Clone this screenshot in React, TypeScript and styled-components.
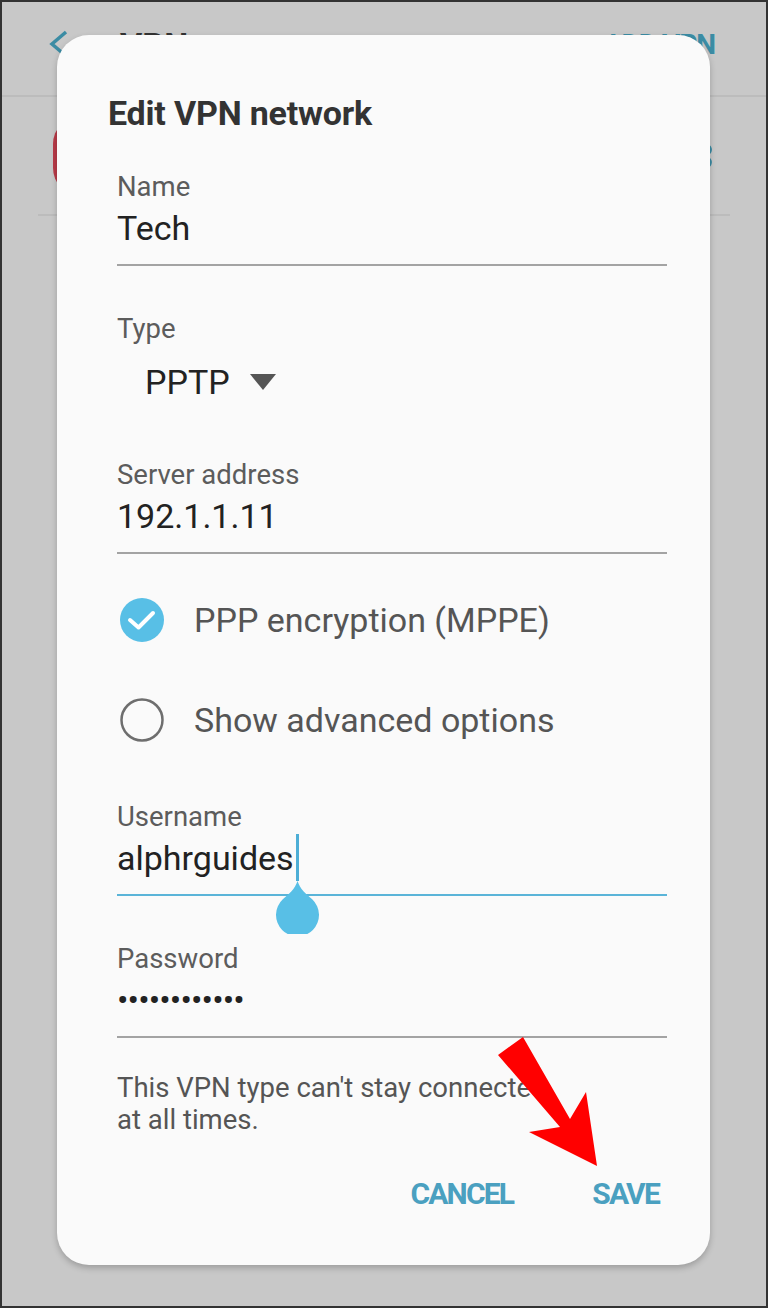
import React from 'react'
import styled, { createGlobalStyle } from 'styled-components'
import { Settings } from 'lucide-react'

const TEAL = '#3b8ca4'
const ACCENT = '#58bfe6'
const LINE = '#a3a3a3'

const GlobalStyle = createGlobalStyle`
  html, body {
    margin: 0;
    padding: 0;
    background: #c8c8c8;
  }
  body {
    font-family: Roboto, 'Noto Sans', 'Liberation Sans', sans-serif;
    -webkit-font-smoothing: antialiased;
  }
  * {
    box-sizing: border-box;
  }
`

const App = () => {
  return (
    <>
      <GlobalStyle />
      <Screen>
        <AppBar>
          <BackIcon viewBox="0 0 22 28">
            <polyline points="18,2 4,14 18,26" />
          </BackIcon>
          <AppTitle>VPN</AppTitle>
          <AddVpn>ADD VPN</AddVpn>
        </AppBar>
        <ListRow>
          <AppIcon />
          <Settings size={40} color={TEAL} strokeWidth={2.4} />
        </ListRow>

        <Dialog>
          <Title>Edit VPN network</Title>
          <Form>
            <Field $mt={38}>
              <Label>Name</Label>
              <Value>Tech</Value>
            </Field>

            <TypeBlock>
              <Label>Type</Label>
              <TypeSelect>
                <Value>PPTP</Value>
                <Caret />
              </TypeSelect>
            </TypeBlock>

            <Field $mt={57}>
              <Label>Server address</Label>
              <Value>192.1.1.11</Value>
            </Field>

            <CheckList>
              <CheckRow>
                <CheckCircle $checked viewBox="0 0 44 44">
                  <circle cx="22" cy="22" r="22" />
                  <polyline points="10,22 18.5,29.5 33,15" />
                </CheckCircle>
                <CheckLabel>PPP encryption (MPPE)</CheckLabel>
              </CheckRow>
              <CheckRow>
                <CheckCircle viewBox="0 0 44 44">
                  <circle cx="22" cy="22" r="20.5" />
                </CheckCircle>
                <CheckLabel>Show advanced options</CheckLabel>
              </CheckRow>
            </CheckList>

            <Field $mt={51} $focused>
              <Label>Username</Label>
              <Value>
                alphrguides
                <Cursor>
                  <CursorBar />
                  <Handle viewBox="0 0 43 53">
                    <path d="M21.5 0 C24 8 30 13 36.2 18.2 A21.5 21.5 0 1 1 6.8 18.2 C13 13 19 8 21.5 0 Z" />
                  </Handle>
                </Cursor>
              </Value>
            </Field>

            <Field $mt={47}>
              <Label>Password</Label>
              <Dots>{'\u2022'.repeat(12)}</Dots>
            </Field>

            <Info>
              This VPN type can't stay connected
              <br />
              at all times.
            </Info>

            <Actions>
              <ActionButton>CANCEL</ActionButton>
              <ActionButton>SAVE</ActionButton>
            </Actions>
          </Form>
        </Dialog>

        <Annotation viewBox="490 1030 115 145">
          <polygon points="498,1055 523,1037 570,1119 586,1092 597,1166 529,1132 560,1127" />
        </Annotation>
      </Screen>
    </>
  )
}

export default App

const Screen = styled.div`
  position: relative;
  width: 768px;
  height: 1308px;
  border: 2px solid #333;
  background: #c8c8c8;
  overflow: hidden;
`

const AppBar = styled.header`
  display: flex;
  align-items: flex-start;
  height: 95px;
  padding: 0 51px 0 46px;
  border-bottom: 2px solid #bcbcbc;
`

const BackIcon = styled.svg`
  width: 22px;
  height: 28px;
  margin-top: 28px;
  fill: none;
  stroke: ${TEAL};
  stroke-width: 3.5;
`

const AppTitle = styled.h1`
  margin: 23px 0 0 50px;
  font-size: 34px;
  line-height: 40px;
  font-weight: 700;
  color: #333;
`

const AddVpn = styled.span`
  margin: 27px 0 0 auto;
  font-size: 28px;
  line-height: 32px;
  font-weight: 700;
  letter-spacing: -1px;
  color: ${TEAL};
`

const ListRow = styled.div`
  display: flex;
  align-items: center;
  justify-content: space-between;
  height: 119px;
  margin: 0 36px;
  padding: 0 15px;
  border-bottom: 2px solid #bcbcbc;
`

const AppIcon = styled.div`
  width: 80px;
  height: 80px;
  border-radius: 28px;
  background: #b83a48;
`

const Dialog = styled.section`
  position: absolute;
  left: 55px;
  top: 33px;
  width: 653px;
  height: 1230px;
  padding: 58px 43px 0 51px;
  border-radius: 32px;
  background: #fafafa;
  box-shadow: 0 3px 6px rgba(0, 0, 0, 0.22);
`

const Title = styled.h2`
  margin: 0;
  font-size: 34px;
  line-height: 40px;
  font-weight: 700;
  letter-spacing: -0.2px;
  color: #333;
`

const Form = styled.div`
  display: flex;
  flex-direction: column;
  margin-left: 9px;
`

const Field = styled.div<{ $mt: number; $focused?: boolean }>`
  display: flex;
  flex-direction: column;
  gap: 5px;
  margin-top: ${({ $mt }) => $mt}px;
  padding-bottom: 16px;
  border-bottom: 2px solid ${({ $focused }) => ($focused ? '#5ab4d8' : LINE)};
`

const Label = styled.div`
  font-size: 27.5px;
  line-height: 32px;
  color: #5c5c5c;
`

const Value = styled.div`
  font-size: 34px;
  line-height: 40px;
  color: #222;
  white-space: nowrap;
`

const Dots = styled(Value)`
  letter-spacing: -0.9px;
`

const TypeBlock = styled.div`
  display: flex;
  flex-direction: column;
  margin-top: 47px;
`

const TypeSelect = styled.div`
  display: flex;
  align-items: center;
  gap: 20px;
  margin: 17px 0 0 28px;
`

const Caret = styled.span`
  width: 0;
  height: 0;
  border-left: 13.5px solid transparent;
  border-right: 13.5px solid transparent;
  border-top: 16px solid #555;
`

const CheckList = styled.div`
  display: flex;
  flex-direction: column;
  gap: 40px;
  margin-top: 36px;
`

const CheckRow = styled.div`
  display: flex;
  align-items: center;
  gap: 30px;
  height: 60px;
  padding-left: 3px;
`

const CheckCircle = styled.svg<{ $checked?: boolean }>`
  width: 44px;
  height: 44px;
  flex-shrink: 0;

  circle {
    fill: ${({ $checked }) => ($checked ? ACCENT : 'none')};
    stroke: ${({ $checked }) => ($checked ? 'none' : '#6e6e6e')};
    stroke-width: 2.5;
  }

  polyline {
    fill: none;
    stroke: #fff;
    stroke-width: 4;
    stroke-linecap: round;
    stroke-linejoin: round;
  }
`

const CheckLabel = styled.span`
  font-size: 34px;
  line-height: 40px;
  color: #555;
`

const Cursor = styled.span`
  position: relative;
  display: inline-block;
  width: 3px;
  height: 0;
  margin-left: 2px;
  vertical-align: top;
`

const CursorBar = styled.span`
  position: absolute;
  top: -4px;
  left: 0;
  width: 3px;
  height: 47px;
  background: #4daed6;
`

const Handle = styled.svg`
  position: absolute;
  top: 43px;
  left: -20px;
  width: 43px;
  height: 53px;
  fill: ${ACCENT};
`

const Info = styled.p`
  margin: 34px 0 0;
  font-size: 27.5px;
  line-height: 32px;
  color: #555;
`

const Actions = styled.div`
  display: flex;
  justify-content: flex-end;
  gap: 79px;
  margin-top: 38px;
  padding-right: 8px;
`

const ActionButton = styled.button`
  padding: 0;
  border: none;
  background: none;
  font-family: inherit;
  font-size: 30px;
  line-height: 40px;
  font-weight: 700;
  letter-spacing: -1.8px;
  color: #4aa0c0;
`

const Annotation = styled.svg`
  position: absolute;
  left: 488px;
  top: 1028px;
  width: 115px;
  height: 145px;
  fill: #ff0000;
`
